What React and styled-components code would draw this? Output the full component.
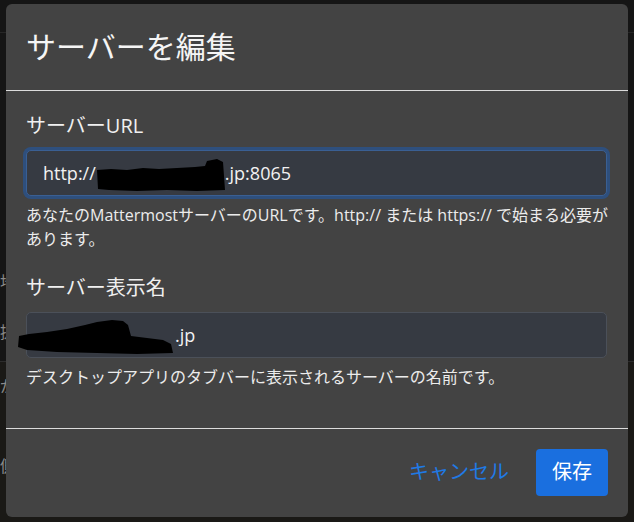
import React from 'react';
import styled, { createGlobalStyle } from 'styled-components';

const GlobalStyle = createGlobalStyle`
  html, body {
    margin: 0;
    padding: 0;
    background: #151515;
    font-family: "Open Sans", "Noto Sans CJK JP", sans-serif;
  }
  * {
    box-sizing: border-box;
  }
`;

const font = `"Open Sans", "Noto Sans CJK JP", sans-serif`;

// page that sits behind the modal
const StyledPage = styled.div`
  width: 634px;
  height: 522px;
  position: relative;
  overflow: hidden;
  display: flex;
  flex-direction: column;
  background: #151515;
`;

const StyledPageBar = styled.div`
  height: 33px;
  border-bottom: 1px solid #262626;
`;

const StyledPageSection = styled.div`
  height: 329px;
  border-bottom: 1px solid #2c2c2c;
  padding-top: 239px;
`;

const StyledPageFooter = styled.div`
  flex: 1;
  background: #1a1916;
  padding-top: 14px;
`;

const StyledPageGlyph = styled.div`
  height: ${props => props.height}px;
  font-family: ${font};
  font-size: 16px;
  line-height: 20px;
  color: #8a8a8a;
`;

// the modal itself
const StyledModal = styled.section`
  position: absolute;
  top: 4px;
  left: 6px;
  width: 622px;
  height: 513px;
  background: #434343;
  border-radius: 6px;
  display: flex;
  flex-direction: column;
  font-family: ${font};
  color: #f3f3f3;
`;

const StyledHeader = styled.header`
  height: 87px;
  padding: 0 20px;
  display: flex;
  align-items: center;
  border-bottom: 1px solid #dcdcdc;
`;

const StyledTitle = styled.h1`
  margin: 0;
  font-size: 30px;
  font-weight: 400;
  line-height: 36px;
  color: #f5f5f5;
`;

const StyledBody = styled.div`
  padding: 21px 21px 0 20px;
  height: 338px;
  border-bottom: 1px solid #dcdcdc;
  display: flex;
  flex-direction: column;
`;

const StyledLabel = styled.label`
  font-size: 20px;
  line-height: 28px;
  color: #f0f0f0;
  margin-top: ${props => props.spaced ? '23px' : '0'};
`;

const StyledField = styled.div`
  margin-top: 10px;
  height: 46px;
  padding-left: ${props => props.indent}px;
  background: #363a42;
  border: 1px solid ${props => props.focused ? '#3a5f93' : '#4b5059'};
  border-radius: 5px;
  box-shadow: ${props => props.focused ? '0 0 0 3px #2e4f7d' : 'none'};
  display: flex;
  align-items: center;
  font-size: 18px;
  color: #f2f2f2;
  white-space: nowrap;
`;

const StyledRedaction = styled.svg`
  flex: none;
  display: block;
  margin-left: ${props => props.shift || 0}px;
  margin-top: ${props => props.drop || 0}px;
`;

const StyledHelp = styled.p`
  margin: 7px 0 0 0;
  font-size: 16px;
  line-height: 24px;
  color: #ececec;
  white-space: nowrap;
`;

const StyledFooter = styled.footer`
  flex: 1;
  padding: 0 20px 2px 0;
  display: flex;
  align-items: center;
  justify-content: flex-end;
  gap: 11px;
`;

const StyledButton = styled.button`
  height: 47px;
  padding: 0 16px;
  border: none;
  border-radius: 4px;
  font-family: ${font};
  font-size: 20px;
  line-height: 24px;
  cursor: pointer;
  background: ${props => props.primary ? '#1a6fdf' : 'transparent'};
  color: ${props => props.primary ? '#ffffff' : '#1f7ae6'};
`;

const UrlRedaction = () => (
  <StyledRedaction width="128" height="32" viewBox="0 0 128 32" shift={1} drop={4}>
    <path
      d="M0,11 L14,10 L30,11 L46,9 L62,10 L80,9 L98,8 L108,7 L110,2 L120,0 L126,3 L128,31 L100,32 L70,31 L40,32 L12,31 L1,30 Z"
      fill="#000"
    />
  </StyledRedaction>
);

const NameRedaction = () => (
  <StyledRedaction width="158" height="38" viewBox="0 0 158 38" shift={-10} drop={1}>
    <path
      d="M2,19 L12,17 L30,15 L50,12 L68,8 L80,5 L95,3 L106,4 L111,8 L114,19 L130,21 L146,23 L154,27 L156,36 L120,37 L80,36 L40,35 L10,33 L1,30 Z"
      fill="#000"
    />
  </StyledRedaction>
);

const App = () => {
  return (
    <>
      <GlobalStyle />
      <StyledPage>
        <StyledPageBar />
        <StyledPageSection>
          <StyledPageGlyph height={50}>地</StyledPageGlyph>
          <StyledPageGlyph height={20}>提</StyledPageGlyph>
        </StyledPageSection>
        <StyledPageFooter>
          <StyledPageGlyph height={80}>が</StyledPageGlyph>
          <StyledPageGlyph height={20}>側</StyledPageGlyph>
        </StyledPageFooter>

        <StyledModal>
          <StyledHeader>
            <StyledTitle>サーバーを編集</StyledTitle>
          </StyledHeader>
          <StyledBody>
            <StyledLabel>サーバーURL</StyledLabel>
            <StyledField focused indent={16}>
              <span>http://</span>
              <UrlRedaction />
              <span>.jp:8065</span>
            </StyledField>
            <StyledHelp>
              あなたのMattermostサーバーのURLです。http:// または https:// で始まる必要が<br />
              あります。
            </StyledHelp>

            <StyledLabel spaced>サーバー表示名</StyledLabel>
            <StyledField indent={0}>
              <NameRedaction />
              <span>.jp</span>
            </StyledField>
            <StyledHelp>デスクトップアプリのタブバーに表示されるサーバーの名前です。</StyledHelp>
          </StyledBody>
          <StyledFooter>
            <StyledButton>キャンセル</StyledButton>
            <StyledButton primary>保存</StyledButton>
          </StyledFooter>
        </StyledModal>
      </StyledPage>
    </>
  );
};

export default App;
